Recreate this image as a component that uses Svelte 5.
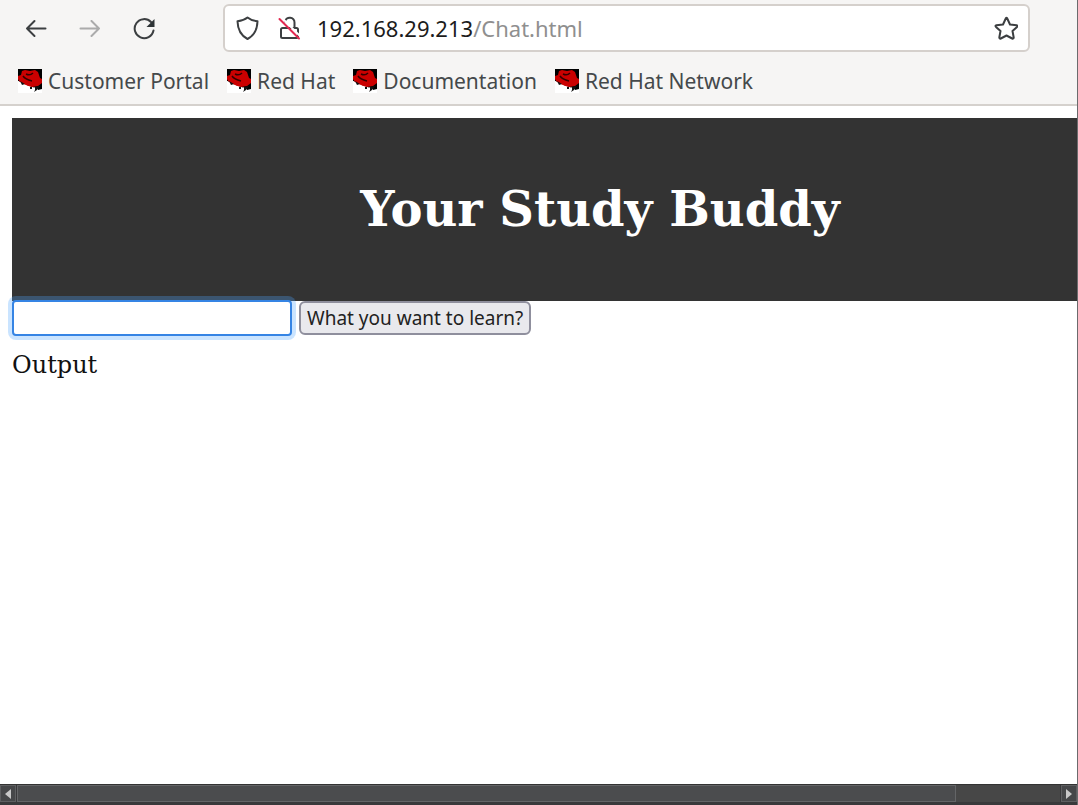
<script>
  const bookmarks = ['Customer Portal', 'Red Hat', 'Documentation', 'Red Hat Network'];

  let topic = $state('');
</script>

<div class="window">
  <header class="chrome">
    <div class="toolbar">
      <nav class="history">
        <button class="icon-btn" aria-label="Back">
          <svg width="24" height="24" viewBox="0 0 24 24"><path d="M21.500 12.500H3M10.500 5L3 12.500l7.500 7.500" /></svg>
        </button>
        <button class="icon-btn" aria-label="Forward" disabled>
          <svg width="24" height="24" viewBox="0 0 24 24"><path d="M2.500 12.500H21M13.500 5l7.500 7.500-7.500 7.500" /></svg>
        </button>
        <button class="icon-btn" aria-label="Reload">
          <svg width="24" height="24" viewBox="0 0 24 24">
            <path d="M21.500 14.500a9.500 9.500 0 1 1-2.500-8.500" />
            <path class="solid" d="M22.500 3v8h-8z" />
          </svg>
        </button>
      </nav>
      <div class="address">
        <svg width="24" height="24" viewBox="0 0 24 24">
          <path d="M11.500 1.500c2.800 2.300 6 3.300 10 3.800-.2 8-2.300 13.700-10 17.700C3.800 19 1.700 13.300 1.500 5.300c4-.5 7.200-1.500 10-3.800z" />
        </svg>
        <svg width="24" height="24" viewBox="0 0 24 24">
          <path d="M4.500 12h14a1.500 1.500 0 0 1 1.500 1.500v7a1.500 1.500 0 0 1-1.500 1.500h-14A1.500 1.500 0 0 1 3 20.500v-7A1.500 1.500 0 0 1 4.500 12zM7 5.500a4.800 4.800 0 0 1 9.500 1V12" />
          <path class="halo" d="M4 2l18 18" />
          <path class="slash" d="M1.500 3l19.500 19.500" />
        </svg>
        <div class="url"><span>192.168.29.213</span>/Chat.html</div>
        <button class="icon-btn" aria-label="Bookmark this page">
          <svg width="24" height="24" viewBox="0 0 24 24">
            <path d="M13 2l3 6.500 6.500.700q1.700.500.500 1.700L18.500 15l1.200 6.500q-.2 1.500-1.500 1L12.500 19.500 6.800 22.500q-1.400.5-1.500-1L6.500 15 2 10.900Q.8 9.700 2.500 9.200L9 8.500 12 2q.5-.7 1 0z" />
          </svg>
        </button>
      </div>
    </div>
    <nav class="bookmarks">
      {#each bookmarks as name}
        <a href="#top">
          <svg class="fedora" width="24" height="24" viewBox="0 0 24 24">
            <rect width="24" height="24" fill="#fff" />
            <path d="M0 0h24v20l-4 1-3-2-8-3-4-2-5-2z" fill="#000" />
            <path d="M7 1l5 1 5-1 3 2 2 6 2 1v4l-4 3-6 1-7-2-5-3-3-4 1-2 3-1 1-4z" fill="#cb0000" />
            <path d="M8 5c2 1 5 1 7-1M5 7c2 3 5 4 9 5" fill="none" stroke="#300" stroke-width="1.500" />
            <path d="M0 12l5 3 3 1 2 2 5 1 3-1 2 2-1 4H0z" fill="#fff" />
            <path d="M2 12l5 3-3 1zM12 18h2v2h-2zM17 18l5-1-3 4-3 2 1-2z" fill="#111" />
          </svg>
          {name}
        </a>
      {/each}
    </nav>
  </header>

  <div class="viewport">
    <main class="page">
      <div class="banner">
        <h1>Your Study Buddy</h1>
      </div>
      <form onsubmit={(e) => e.preventDefault()}>
        <input type="text" bind:value={topic} aria-label="Topic" />
        <button class="ask">What you want to learn?</button>
      </form>
      <p>Output</p>
    </main>
  </div>

  <div class="scrollbar">
    <button aria-label="Scroll left"><svg width="6" height="10" viewBox="0 0 6 10"><path d="M6 0v10L0 5z" /></svg></button>
    <div class="track"><div class="thumb"></div></div>
    <button aria-label="Scroll right"><svg width="6" height="10" viewBox="0 0 6 10"><path d="M0 0v10l6-5z" /></svg></button>
  </div>
</div>

<style>
  :global(body) {
    margin: 0;
  }

  .window {
    display: flex;
    flex-direction: column;
    box-sizing: border-box;
    height: 100vh;
    border-right: 1px solid #6b6b6d;
    background: #fff;
    overflow: hidden;
  }

  button {
    display: flex;
    align-items: center;
    justify-content: center;
    padding: 0;
    border: 0;
    background: none;
  }

  .chrome {
    background: #f6f5f4;
    border-bottom: 2px solid #d5d1cd;
    color: #45494b;
    font-family: "Noto Sans", sans-serif;
    font-size: 21px;
  }

  .chrome svg:not(.fedora) {
    flex: none;
    fill: none;
    stroke: #3c3f41;
    stroke-width: 2;
    stroke-linejoin: round;
    stroke-linecap: round;
  }

  .toolbar {
    display: flex;
    align-items: center;
    padding: 4px 47px 0 24px;
  }

  .history {
    display: flex;
    gap: 30px;
    width: 199px;
  }

  .icon-btn:disabled {
    opacity: 0.4;
  }

  .chrome .solid {
    fill: #2e3436;
    stroke: none;
  }

  .chrome .halo {
    stroke: #fff;
  }

  .chrome .slash {
    stroke: #e22850;
  }

  .address {
    display: flex;
    align-items: center;
    flex: 1;
    gap: 18px;
    box-sizing: border-box;
    height: 48px;
    padding: 0 10px 0 11px;
    border: 2px solid #d5d0cc;
    border-radius: 6px;
    background: #fff;
  }

  .url {
    flex: 1;
    margin-left: -3px;
    color: #8f8f8f;
    font-size: 22px;
  }

  .url span {
    color: #1c1c1c;
  }

  .bookmarks {
    display: flex;
    gap: 18px;
    padding: 14px 18px 8px;
  }

  .bookmarks a {
    display: flex;
    align-items: center;
    gap: 6px;
    color: inherit;
    line-height: 30px;
    text-decoration: none;
    white-space: nowrap;
  }

  .viewport {
    flex: 1;
    overflow: hidden;
  }

  .page {
    box-sizing: border-box;
    width: calc(100% + 123px);
    padding: 12px;
    color: #111;
    font-family: "DejaVu Serif", serif;
    font-size: 24px;
  }

  .banner {
    padding: 60px 0;
    background: #333;
    color: #fff;
    text-align: center;
  }

  h1 {
    margin: 0;
    font-size: 48px;
    line-height: 63px;
  }

  form {
    display: flex;
    align-items: center;
    gap: 7px;
    margin-top: -1px;
  }

  input {
    box-sizing: border-box;
    width: 280px;
    height: 36px;
    padding: 2px 4px;
    border: 2px solid #3584e4;
    border-radius: 4px;
    outline: none;
    box-shadow: 0 0 0 4px rgba(80, 165, 255, 0.3);
    font: 19px "Noto Sans", sans-serif;
  }

  .ask {
    height: 34px;
    padding: 0 6px;
    border: 2px solid #8f8f9d;
    border-radius: 6px;
    background: #e9e9ed;
    color: #222;
    font: 19px "Noto Sans", sans-serif;
  }

  p {
    margin: 13px 0;
    line-height: 32px;
  }

  .scrollbar {
    display: flex;
    height: 17px;
    padding-bottom: 3px;
    border-top: 1px solid #333;
    background: #39393b;
  }

  .scrollbar button {
    box-sizing: border-box;
    width: 16px;
    border: 1px solid #5e5f61;
    background: #464749;
  }

  .scrollbar path {
    fill: #c8c8c8;
  }

  .track {
    display: flex;
    flex: 1;
    margin: 0 1px;
    background: #474747;
  }

  .thumb {
    box-sizing: border-box;
    width: 90%;
    border: 1px solid #646567;
    background: #4b4c4e;
  }
</style>
